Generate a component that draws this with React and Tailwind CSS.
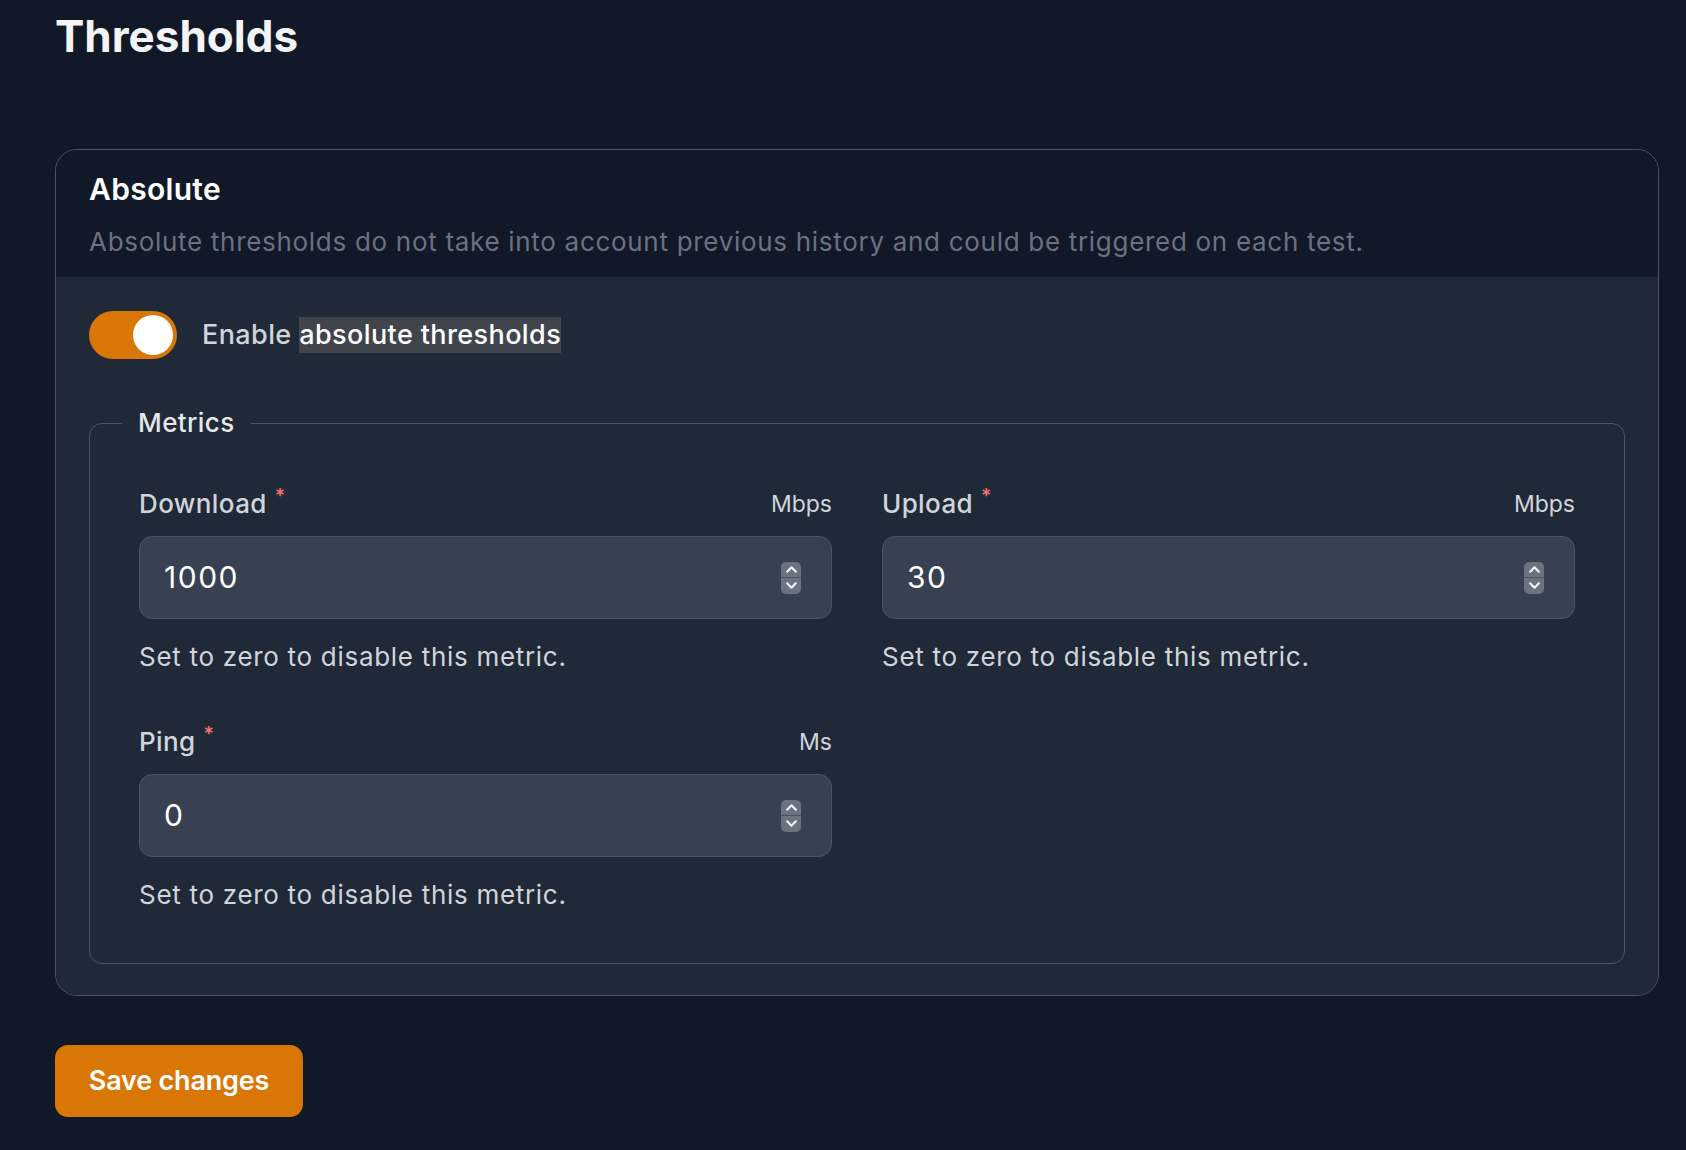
import React, { useState } from "react";

const Spinner = () => (
  <div className="flex h-[32px] w-[20px] flex-col overflow-hidden rounded-[5px] bg-[#6b7280]">
    <div className="flex flex-1 items-center justify-center border-b border-[#4b5563]">
      <svg width="13" height="9" viewBox="0 0 12 8" fill="none">
        <path d="M2 6l4-4 4 4" stroke="#f3f4f6" strokeWidth="2" strokeLinecap="round" strokeLinejoin="round" />
      </svg>
    </div>
    <div className="flex flex-1 items-center justify-center">
      <svg width="13" height="9" viewBox="0 0 12 8" fill="none">
        <path d="M2 2l4 4 4-4" stroke="#f3f4f6" strokeWidth="2" strokeLinecap="round" strokeLinejoin="round" />
      </svg>
    </div>
  </div>
);

const MetricField = ({ label, unit, value }) => (
  <div className="flex flex-col">
    <div className="flex h-[36px] items-center justify-between">
      <span className="text-[26px] leading-[36px] font-medium tracking-[0.4px] text-[#d1d5db]">
        {label}
        <sup className="ml-[8px] text-[20px] font-medium text-[#f87171]">*</sup>
      </span>
      <span className="text-[23px] leading-[36px] text-[#d1d5db]">{unit}</span>
    </div>
    <div className="mt-[14px] flex h-[83px] items-center justify-between rounded-[13px] border border-[#4b5563] bg-[#374151] pl-[24px] pr-[30px]">
      <span className="text-[30px] tracking-[1.5px] text-white">{value}</span>
      <Spinner />
    </div>
    <p className="mt-[20px] text-[26px] leading-[36px] tracking-[0.7px] text-[#d1d5db]">
      Set to zero to disable this metric.
    </p>
  </div>
);

export default function App() {
  const [enabled, setEnabled] = useState(true);

  return (
    <div
      className="min-h-[1150px] bg-[#111827] pt-[8px] pl-[55px]"
      style={{ fontFamily: "Inter, 'Noto Sans', sans-serif" }}
    >
      <h1 className="text-[44px] leading-[56px] font-bold text-[#f3f4f6]">Thresholds</h1>

      <div className="mt-[85px] w-[1604px] overflow-hidden rounded-[22px] border border-[#4b5563]">
        {/* header */}
        <div className="bg-[#111827] px-[33px] pt-[21px] pb-[17px]">
          <h2 className="text-[30px] leading-[36px] font-semibold tracking-[0.3px] text-white">Absolute</h2>
          <p className="mt-[17px] text-[26px] leading-[36px] tracking-[0.7px] text-[#6b7280]">
            Absolute thresholds do not take into account previous history and could be triggered on each test.
          </p>
        </div>

        {/* body */}
        <div className="bg-[#1f2937] px-[33px] pt-[34px] pb-[31px]">
          <div className="flex items-center">
            <button
              onClick={() => setEnabled(!enabled)}
              className={
                "flex h-[48px] w-[88px] items-center rounded-full px-[4px] " +
                (enabled ? "justify-end bg-[#d97706]" : "justify-start bg-[#4b5563]")
              }
            >
              <span className="block h-[40px] w-[40px] rounded-full bg-white" />
            </button>
            <span className="ml-[25px] text-[27px] leading-[36px] font-medium tracking-[0.4px] text-[#d1d5db]">
              Enable{" "}
              <span className="inline-block bg-[#3f444d] leading-[36px] text-white">absolute thresholds</span>
            </span>
          </div>

          <fieldset className="mt-[46px] rounded-[13px] border border-[#4b5563] px-[32px] pb-[50px]">
            <legend className="px-[16px] text-[26px] leading-[36px] font-medium tracking-[0.4px] text-[#e5e7eb]">Metrics</legend>
            <div className="mx-[17px] mt-[45px] grid grid-cols-2 gap-x-[50px] gap-y-[49px]">
              <MetricField label="Download" unit="Mbps" value="1000" />
              <MetricField label="Upload" unit="Mbps" value="30" />
              <MetricField label="Ping" unit="Ms" value="0" />
            </div>
          </fieldset>
        </div>
      </div>

      <button className="mt-[49px] h-[72px] w-[248px] rounded-[13px] bg-[#d97706] text-[27px] font-semibold tracking-[-0.2px] text-white">
        Save changes
      </button>
    </div>
  );
}
